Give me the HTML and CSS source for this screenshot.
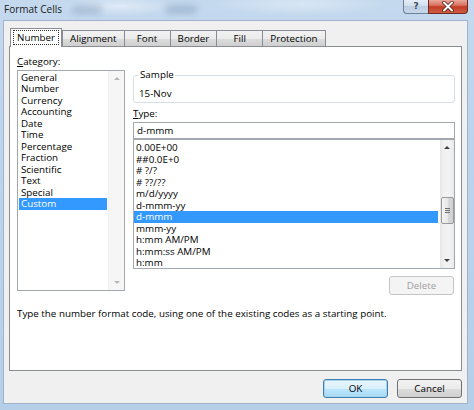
FILE: index.html
```html
<!DOCTYPE html>
<html>
<head>
<meta charset="utf-8">
<link rel="stylesheet" href="styles.css">
</head>
<body>
<div class="window">
  <div class="titlebar">
    <span class="title">Format Cells</span>
    <span class="blur b1"></span>
    <span class="blur b2"></span>
    <div class="ctrls">
      <div class="btn-help">?</div>
      <div class="btn-close">
        <svg width="14" height="11" viewBox="0 0 14 11"><path d="M3 1.5 L11 9.5 M11 1.5 L3 9.5" stroke="#5a1c14" stroke-width="3.6" stroke-linecap="round"/><path d="M3 1.5 L11 9.5 M11 1.5 L3 9.5" stroke="#ffffff" stroke-width="2" stroke-linecap="round"/></svg>
      </div>
    </div>
  </div>
  <div class="client">
    <div class="tabs">
      <div class="tab active"><span class="focus">Number</span></div>
      <div class="tab">Alignment</div>
      <div class="tab">Font</div>
      <div class="tab">Border</div>
      <div class="tab">Fill</div>
      <div class="tab">Protection</div>
    </div>
    <div class="panel">
      <div class="cols">
        <div class="left">
          <div class="label"><u>C</u>ategory:</div>
          <div class="listbox catlist">
            <ul class="items">
              <li>General</li>
              <li>Number</li>
              <li>Currency</li>
              <li>Accounting</li>
              <li>Date</li>
              <li>Time</li>
              <li>Percentage</li>
              <li>Fraction</li>
              <li>Scientific</li>
              <li>Text</li>
              <li>Special</li>
              <li class="sel">Custom</li>
            </ul>
            <div class="vscroll disabled">
              <span class="arr up"></span>
              <span class="arr down"></span>
            </div>
          </div>
        </div>
        <div class="right">
          <fieldset class="sample">
            <legend>Sample</legend>
            <div class="sample-val">15-Nov</div>
          </fieldset>
          <div class="label type-label"><u>T</u>ype:</div>
          <div class="textbox">d-mmm</div>
          <div class="listbox typelist">
            <ul class="items">
              <li>0.00E+00</li>
              <li>##0.0E+0</li>
              <li># ?/?</li>
              <li># ??/??</li>
              <li>m/d/yyyy</li>
              <li>d-mmm-yy</li>
              <li class="sel">d-mmm</li>
              <li>mmm-yy</li>
              <li>h:mm AM/PM</li>
              <li>h:mm:ss AM/PM</li>
              <li>h:mm</li>
            </ul>
            <div class="vscroll">
              <span class="arr up"></span>
              <div class="track"><div class="thumb"><i></i><i></i><i></i></div></div>
              <span class="arr down"></span>
            </div>
          </div>
          <div class="delete-row"><button class="btn" disabled>Delete</button></div>
        </div>
      </div>
      <p class="desc">Type the number format code, using one of the existing codes as a starting point.</p>
    </div>
    <div class="buttons">
      <button class="btn default">OK</button>
      <button class="btn">Cancel</button>
    </div>
  </div>
</div>
</body>
</html>
```
FILE: styles.css
```css
* { box-sizing: border-box; }
html, body { margin: 0; padding: 0; }
body {
  width: 474px;
  height: 410px;
  overflow: hidden;
  font-family: "Open Sans", "Noto Sans", sans-serif;
  font-size: 9.8px;
  color: #000;
}
.window {
  width: 474px;
  height: 410px;
  display: flex;
  flex-direction: column;
  background: linear-gradient(180deg, #c4d9ee 0%, #bcd4ec 30%, #b6cfe9 100%);
  position: relative;
}
.titlebar {
  height: 20px;
  display: flex;
  align-items: flex-start;
  position: relative;
  background:
    radial-gradient(ellipse 60px 10px at 120px 6px, rgba(255,255,255,0.45), transparent),
    radial-gradient(ellipse 90px 12px at 300px 4px, rgba(255,255,255,0.35), transparent);
}
.title {
  font-size: 10px;
  line-height: 12px;
  margin: 3px 0 0 4px;
  color: #1a1a1a;
}
.blur {
  position: absolute;
  top: 5px;
  height: 9px;
  background: rgba(60, 90, 130, 0.22);
  filter: blur(3px);
  border-radius: 4px;
}
.b1 { left: 72px; width: 30px; }
.b2 { left: 165px; width: 32px; }
.ctrls {
  margin-left: auto;
  margin-right: 6px;
  display: flex;
}
.btn-help {
  width: 25px;
  height: 14px;
  border: 1px solid #6d7f96;
  border-top: none;
  border-right: none;
  border-radius: 0 0 0 4px;
  background: linear-gradient(180deg, #e4edf7 0%, #d2dfee 45%, #bccde2 50%, #c9d9ec 100%);
  color: #3c4a5c;
  font-family: "DejaVu Sans", sans-serif;
  font-weight: bold;
  font-size: 9px;
  line-height: 13px;
  text-align: center;
}
.btn-close {
  width: 40px;
  height: 14px;
  border: 1px solid #6b2a22;
  border-top: none;
  border-radius: 0 0 4px 0;
  background: linear-gradient(180deg, #e9a99b 0%, #d8735f 40%, #c33c25 52%, #d05c44 100%);
  display: flex;
  align-items: center;
  justify-content: center;
}
.client {
  flex: 1;
  margin: 0 6px 6px 3px;
  background: #f0f0f0;
  border: 1px solid #9fb3cb;
  display: flex;
  flex-direction: column;
  padding: 7px 5px 5px 5px;
}
.tabs {
  display: flex;
  align-items: flex-end;
  height: 19px;
  padding-left: 1px;
  margin-bottom: -1px;
  position: relative;
  z-index: 1;
}
.tab {
  height: 17px;
  min-width: 47px;
  padding: 0 7px;
  margin-left: -1px;
  border: 1px solid #898c95;
  text-align: center;
  line-height: 15px;
  background: linear-gradient(180deg, #f2f2f2 0%, #ebebeb 50%, #dddddd 51%, #cfcfcf 100%);
  white-space: nowrap;
}
.tab.active {
  margin-left: 0;
  height: 19px;
  min-width: 52px;
  padding: 1px 2px 0 2px;
  background: #fff;
  border-bottom: none;
  position: relative;
  z-index: 2;
  line-height: 14px;
}
.tab.active + .tab { margin-left: 0; }
.focus {
  display: block;
  border: 1px dotted #333;
  padding: 0 3px;
  line-height: 13px;
}
.panel {
  height: 325px;
  background: #fff;
  border: 1px solid #898c95;
  padding: 9px 6px 0 7px;
}
.cols {
  display: grid;
  grid-template-columns: 108px 322px;
  column-gap: 8px;
  align-items: start;
}
.label {
  line-height: 12px;
  margin-bottom: 2px;
}
.listbox {
  border: 1px solid #a3a7ae;
  display: flex;
  background: #fff;
  overflow: hidden;
}
.items {
  list-style: none;
  margin: 0;
  padding: 1px 1px 0 1px;
  flex: 1;
  min-width: 0;
}
.items li {
  height: 11.5px;
  line-height: 11.5px;
  padding-left: 2px;
  white-space: nowrap;
}
.items li.sel {
  background: #3399ff;
  color: #fff;
}
.catlist { height: 221px; }
.catlist .items { padding-top: 0.5px; }
.typelist { height: 130px; }
.typelist .items { padding-top: 2px; padding-left: 0; padding-right: 2px; }
.vscroll {
  width: 14px;
  display: flex;
  flex-direction: column;
  align-items: center;
  justify-content: space-between;
  background: linear-gradient(90deg, #e6e6e6, #f2f2f2 30%, #f2f2f2 70%, #e9e9e9);
  padding: 6px 0 6px 0;
}
.vscroll.disabled {
  width: 16px;
  background: #f6f6f6;
  border-left: 1px solid #f0f0f0;
}
.arr {
  width: 0;
  height: 0;
  border-left: 3px solid transparent;
  border-right: 3px solid transparent;
  flex: none;
}
.arr.up { border-bottom: 3px solid #404040; }
.arr.down { border-top: 3px solid #404040; }
.vscroll.disabled .arr.up { border-bottom-color: #b8b8b8; }
.vscroll.disabled .arr.down { border-top-color: #b8b8b8; }
.track {
  flex: 1;
  width: 100%;
  display: flex;
  flex-direction: column;
  padding-top: 48px;
}
.thumb {
  width: 13px;
  height: 27px;
  margin-left: 1px;
  border: 1px solid #9a9a9a;
  border-radius: 2px;
  background: linear-gradient(90deg, #f4f4f4 0%, #e8e8e8 50%, #d9d9d9 51%, #d0d0d0 100%);
  display: flex;
  flex-direction: column;
  align-items: center;
  justify-content: center;
  gap: 1px;
}
.thumb i {
  display: block;
  width: 5px;
  height: 1px;
  background: #6e6e6e;
}
.sample {
  margin: 13px 0 0 0;
  padding: 7px 6px 2px 5px;
  border: 1px solid #d5dfe5;
  border-radius: 3px;
  min-width: 0;
}
.sample legend {
  padding: 0 1px;
  margin-left: 0;
  line-height: 12px;
}
.sample-val { line-height: 12px; }
.type-label { margin-top: 5px; margin-bottom: 2px; }
.textbox {
  height: 17px;
  border: 1px solid #a3a7ae;
  line-height: 15px;
  padding-left: 3px;
  background: #fff;
}
.delete-row {
  display: flex;
  justify-content: flex-end;
  margin-top: 7px;
  padding-right: 1px;
}
.btn {
  width: 65px;
  height: 19px;
  font-family: inherit;
  font-size: 9.8px;
  line-height: 15px;
  padding: 0;
  color: #000;
  border: 1px solid #707070;
  border-radius: 3px;
  background: linear-gradient(180deg, #f2f2f2 0%, #ebebeb 50%, #dddddd 51%, #cfcfcf 100%);
}
.btn:disabled {
  color: #a0a0a0;
  border-color: #c5c5c5;
  background: #f4f4f4;
}
.btn.default {
  border-color: #3c7fb1;
  box-shadow: inset 0 0 0 1px #a6d3f0;
  background: linear-gradient(180deg, #eaf6fd 0%, #d9f0fc 50%, #bee6fd 51%, #a7d9f5 100%);
}
.desc {
  margin: 13px 0 0 0;
  line-height: 12px;
}
.buttons {
  display: flex;
  justify-content: flex-end;
  gap: 9px;
  margin-top: 8px;
}
```
